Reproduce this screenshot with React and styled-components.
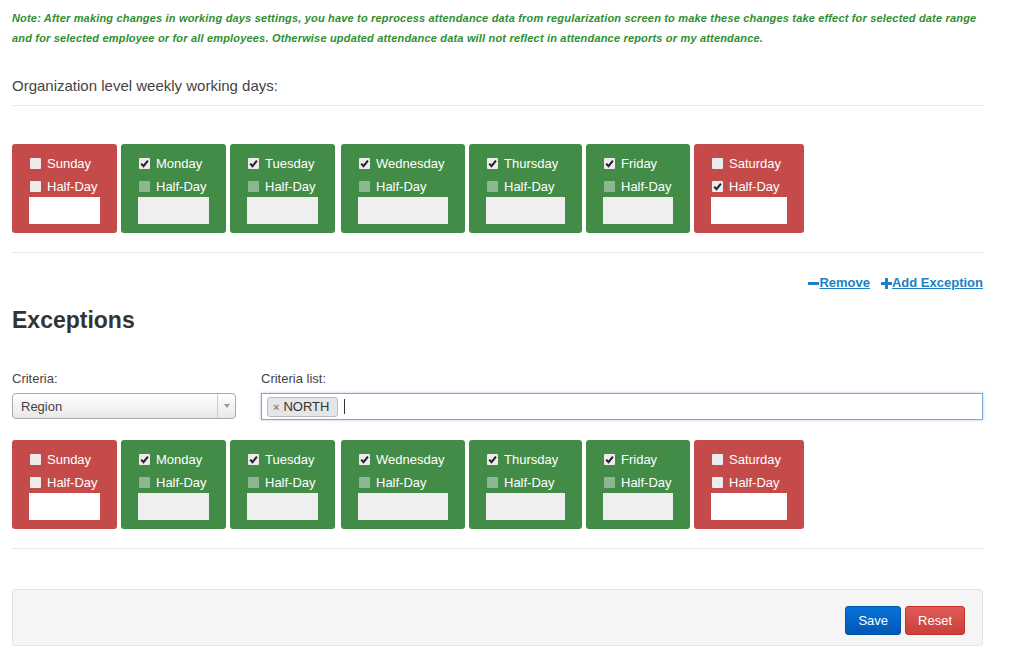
import React from "react";
import styled, { createGlobalStyle } from "styled-components";

const Global = createGlobalStyle`
  html, body { margin: 0; padding: 0; background: #fff; }
  body { font-family: "Liberation Sans", Arial, sans-serif; color: #333; }
  * { box-sizing: border-box; }
`;

const Page = styled.div`
  width: 971px;
  margin-left: 12px;
  padding-top: 8px;
`;

const Note = styled.p`
  margin: 0;
  color: #2f8f2f;
  font-size: 11px;
  font-weight: bold;
  font-style: italic;
  line-height: 20px;
  letter-spacing: 0.18px;
  white-space: nowrap;
`;

const SectionTitle = styled.div`
  margin-top: 28px;
  font-size: 15px;
  line-height: 20px;
  color: #444;
`;

const Rule = styled.div`
  height: 1px;
  background: #e6e6e6;
  margin-top: ${(p) => p.$top}px;
`;

const DayRow = styled.div`
  display: flex;
  gap: 4px;
  margin-top: ${(p) => p.$top}px;
`;

const DayBox = styled.div`
  width: ${(p) => p.$w}px;
  height: 89px;
  border-radius: 3px;
  margin-left: ${(p) => p.$ml || 0}px;
  background: ${(p) => (p.$off ? "#c44b49" : "#428c48")};
  padding: 10px 0 0 17px;
  display: flex;
  flex-direction: column;
`;

const CheckLine = styled.div`
  display: flex;
  align-items: center;
  height: 19px;
  margin-bottom: ${(p) => (p.$second ? 1 : 4)}px;
  color: #fff;
  font-size: 13px;
  gap: 6px;
  padding-left: 1px;
`;

const Box = styled.span`
  width: 11px;
  height: 11px;
  border-radius: 1px;
  background: ${(p) => (p.$disabled ? "rgba(235,235,235,0.45)" : "#ececec")};
  display: inline-flex;
  align-items: center;
  justify-content: center;
  flex: none;
`;

const HoursInput = styled.div`
  width: ${(p) => p.$w - 34}px;
  height: 27px;
  background: ${(p) => (p.$off ? "#fff" : "#efefef")};
`;

const Links = styled.div`
  display: flex;
  justify-content: flex-end;
  gap: 11px;
  margin-top: 22px;
  font-size: 13px;
  font-weight: bold;
  line-height: 16px;
`;

const LinkA = styled.a`
  color: #1b80c4;
  text-decoration: none;
  display: inline-flex;
  align-items: center;
  & span { text-decoration: underline; }
`;

const Heading = styled.h2`
  margin: 15px 0 0;
  font-size: 23px;
  line-height: 28px;
  font-weight: bold;
  color: #333;
`;

const CriteriaRow = styled.div`
  display: flex;
  gap: 25px;
  margin-top: 37px;
`;

const Field = styled.div`
  display: flex;
  flex-direction: column;
  width: ${(p) => p.$w}px;
`;

const Label = styled.label`
  font-size: 13px;
  line-height: 16px;
  color: #444;
  margin-bottom: 6px;
`;

const Select = styled.div`
  height: 26px;
  border: 1px solid #aaa;
  border-radius: 4px;
  background: linear-gradient(#fff 0%, #f4f4f4 50%, #e8e8e8 100%);
  display: flex;
  font-size: 13px;
  color: #444;
`;

const SelectText = styled.div`
  flex: 1;
  padding-left: 8px;
  display: flex;
  align-items: center;
`;

const SelectArrow = styled.div`
  width: 18px;
  border-left: 1px solid #ccc;
  display: flex;
  align-items: center;
  justify-content: center;
  &::after {
    content: "";
    border-left: 3px solid transparent;
    border-right: 3px solid transparent;
    border-top: 4px solid #999;
  }
`;

const TagInput = styled.div`
  height: 27px;
  border: 1px solid #7fa7d6;
  box-shadow: 0 0 3px rgba(82, 142, 210, 0.45);
  background: #fff;
  display: flex;
  align-items: center;
  padding-left: 5px;
  gap: 6px;
`;

const Tag = styled.span`
  height: 20px;
  border: 1px solid #bbb;
  border-radius: 3px;
  background: #e6e6e6;
  display: inline-flex;
  align-items: center;
  padding: 0 5px 0 5px;
  font-size: 13px;
  color: #333;
  gap: 4px;
  width: 71px;
`;

const TagX = styled.span`
  font-size: 11px;
  color: #888;
  font-weight: bold;
`;

const Caret = styled.span`
  width: 1px;
  height: 15px;
  background: #333;
`;

const Footer = styled.div`
  margin-top: 40px;
  height: 57px;
  border: 1px solid #e3e3e3;
  border-radius: 3px;
  background: #f5f5f5;
  display: flex;
  justify-content: flex-end;
  align-items: center;
  gap: 4px;
  padding-right: 17px;
`;

const Button = styled.button`
  height: 29px;
  padding: 0 12px;
  border: 1px solid ${(p) => (p.$danger ? "#c9302c" : "#0054a8")};
  border-radius: 3px;
  background: ${(p) =>
    p.$danger
      ? "linear-gradient(#e05a56, #c9403c)"
      : "linear-gradient(#0874d8, #0058b8)"};
  color: #fff;
  font-family: "Liberation Sans", Arial, sans-serif;
  font-size: 13px;
  margin-top: 6px;
`;

const Check = () => (
  <svg width="9" height="9" viewBox="0 0 9 9">
    <path d="M1.2 4.6 L3.5 7.2 L7.9 1.6" fill="none" stroke="#2a1c2c" strokeWidth="2" />
  </svg>
);

const Checkbox = ({ checked, disabled }) => (
  <Box $disabled={disabled}>{checked && <Check />}</Box>
);

const days = [
  { name: "Sunday", w: 105, off: true },
  { name: "Monday", w: 105 },
  { name: "Tuesday", w: 105 },
  { name: "Wednesday", w: 124, ml: 2 },
  { name: "Thursday", w: 113 },
  { name: "Friday", w: 104 },
  { name: "Saturday", w: 110, off: true },
];

const DaysRow = ({ top, satHalf }) => (
  <DayRow $top={top}>
    {days.map((d) => (
      <DayBox key={d.name} $w={d.w} $off={d.off} $ml={d.ml}>
        <CheckLine>
          <Checkbox checked={!d.off} />
          {d.name}
        </CheckLine>
        <CheckLine $second>
          <Checkbox disabled={!d.off} checked={d.name === "Saturday" && satHalf} />
          Half-Day
        </CheckLine>
        <HoursInput $w={d.w} $off={d.off} />
      </DayBox>
    ))}
  </DayRow>
);

export default function App() {
  return (
    <>
      <Global />
      <Page>
        <Note>
          Note: After making changes in working days settings, you have to reprocess attendance data from regularization screen to make these changes take effect for selected date range
          <br />
          and for selected employee or for all employees. Otherwise updated attendance data will not reflect in attendance reports or my attendance.
        </Note>
        <SectionTitle>Organization level weekly working days:</SectionTitle>
        <Rule $top={9} />
        <DaysRow top={38} satHalf />
        <Rule $top={19} />
        <Links>
          <LinkA href="#">
            <svg width="11" height="11" viewBox="0 0 11 11"><rect x="0" y="4" width="11" height="3" fill="#1b80c4" /></svg>
            <span>Remove</span>
          </LinkA>
          <LinkA href="#">
            <svg width="11" height="11" viewBox="0 0 11 11"><rect x="0" y="4" width="11" height="3" fill="#1b80c4" /><rect x="4" y="0" width="3" height="11" fill="#1b80c4" /></svg>
            <span>Add Exception</span>
          </LinkA>
        </Links>
        <Heading>Exceptions</Heading>
        <CriteriaRow>
          <Field $w={224}>
            <Label>Criteria:</Label>
            <Select>
              <SelectText>Region</SelectText>
              <SelectArrow />
            </Select>
          </Field>
          <Field $w={722}>
            <Label>Criteria list:</Label>
            <TagInput>
              <Tag>
                <TagX>×</TagX>NORTH
              </Tag>
              <Caret />
            </TagInput>
          </Field>
        </CriteriaRow>
        <DaysRow top={20} />
        <Rule $top={19} />
        <Footer>
          <Button>Save</Button>
          <Button $danger>Reset</Button>
        </Footer>
      </Page>
    </>
  );
}
